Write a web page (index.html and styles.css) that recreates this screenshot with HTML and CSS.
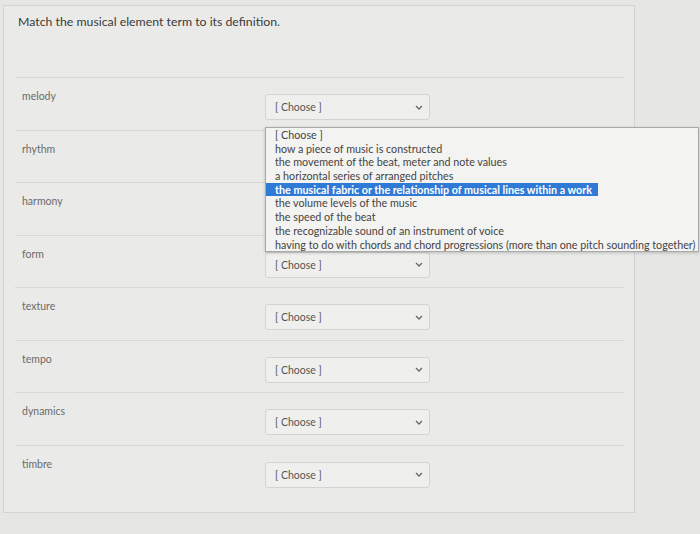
FILE: index.html
```html
<!DOCTYPE html>
<html>
<head>
<meta charset="utf-8">
<link rel="stylesheet" href="styles.css">
</head>
<body>
<div class="panel">
  <div class="header"><p class="title">Match the musical element term to its definition.</p></div>
  <div class="rows">
    <div class="row">
      <div class="label">melody</div>
      <div class="select-wrap">
        <div class="select"><span>[ Choose ]</span><svg class="chev" width="8" height="5" viewBox="0 0 8 5"><path d="M1 1l3 3 3-3" fill="none" stroke="#666" stroke-width="1.3"/></svg></div>
        <ul class="dropdown">
          <li>[ Choose ]</li>
          <li>how a piece of music is constructed</li>
          <li>the movement of the beat, meter and note values</li>
          <li>a horizontal series of arranged pitches</li>
          <li class="active">the musical fabric or the relationship of musical lines within a work</li>
          <li>the volume levels of the music</li>
          <li>the speed of the beat</li>
          <li>the recognizable sound of an instrument of voice</li>
          <li>having to do with chords and chord progressions (more than one pitch sounding together)</li>
        </ul>
      </div>
    </div>
    <div class="row">
      <div class="label">rhythm</div>
      <div class="select-wrap"></div>
    </div>
    <div class="row">
      <div class="label">harmony</div>
      <div class="select-wrap"></div>
    </div>
    <div class="row">
      <div class="label">form</div>
      <div class="select-wrap"><div class="select"><span>[ Choose ]</span><svg class="chev" width="8" height="5" viewBox="0 0 8 5"><path d="M1 1l3 3 3-3" fill="none" stroke="#666" stroke-width="1.3"/></svg></div></div>
    </div>
    <div class="row">
      <div class="label">texture</div>
      <div class="select-wrap"><div class="select"><span>[ Choose ]</span><svg class="chev" width="8" height="5" viewBox="0 0 8 5"><path d="M1 1l3 3 3-3" fill="none" stroke="#666" stroke-width="1.3"/></svg></div></div>
    </div>
    <div class="row">
      <div class="label">tempo</div>
      <div class="select-wrap"><div class="select"><span>[ Choose ]</span><svg class="chev" width="8" height="5" viewBox="0 0 8 5"><path d="M1 1l3 3 3-3" fill="none" stroke="#666" stroke-width="1.3"/></svg></div></div>
    </div>
    <div class="row">
      <div class="label">dynamics</div>
      <div class="select-wrap"><div class="select"><span>[ Choose ]</span><svg class="chev" width="8" height="5" viewBox="0 0 8 5"><path d="M1 1l3 3 3-3" fill="none" stroke="#666" stroke-width="1.3"/></svg></div></div>
    </div>
    <div class="row">
      <div class="label">timbre</div>
      <div class="select-wrap"><div class="select"><span>[ Choose ]</span><svg class="chev" width="8" height="5" viewBox="0 0 8 5"><path d="M1 1l3 3 3-3" fill="none" stroke="#666" stroke-width="1.3"/></svg></div></div>
    </div>
  </div>
</div>
</body>
</html>
```
FILE: styles.css
```css
html, body {
  margin: 0;
  padding: 0;
  background: #e6e6e4;
  font-family: Lato, "Liberation Sans", sans-serif;
}
body {
  padding: 5px 0 0 3px;
  width: 700px;
  height: 534px;
  box-sizing: border-box;
  overflow: hidden;
}
.panel {
  width: 632px;
  height: 508px;
  box-sizing: border-box;
  border: 1px solid #d3d3d1;
  background: #eaeae8;
}
.header {
  height: 71px;
  padding: 8px 0 0 14px;
  box-sizing: border-box;
}
.title {
  margin: 0;
  font-size: 12.3px;
  line-height: 15px;
  color: #3a3a3a;
}
.rows {
  margin: 0 10px 0 11px;
}
.row {
  display: grid;
  grid-template-columns: 250px 165px;
  height: 52.5px;
  box-sizing: border-box;
  border-top: 1px solid #d7d7d5;
}
.label {
  padding: 12px 0 0 7px;
  font-size: 10.5px;
  line-height: 13px;
  color: #6a6a6a;
}
.select-wrap {
  position: relative;
  padding-top: 16px;
}
.select {
  height: 26px;
  box-sizing: border-box;
  border: 1px solid #d4d4d2;
  border-radius: 3px;
  background: #efefed;
  display: flex;
  align-items: center;
  justify-content: space-between;
  padding: 0 6px 0 9px;
  font-size: 10.5px;
  color: #555;
}
.chev {
  display: block;
}
.dropdown {
  position: absolute;
  left: 0;
  top: 49px;
  width: 432px;
  margin: 0;
  padding: 0;
  list-style: none;
  border: 1px solid #a9a9a9;
  background: #f3f3f1;
  box-shadow: 0 1px 3px rgba(0,0,0,0.2);
  z-index: 2;
}
.dropdown li {
  height: 13.7px;
  line-height: 13.7px;
  padding-left: 9px;
  font-size: 10.75px;
  color: #444;
  white-space: nowrap;
}
.dropdown li.active {
  background: linear-gradient(to right, #2f7ad6 332px, transparent 332px);
  color: #fff;
  font-weight: bold;
}
```
